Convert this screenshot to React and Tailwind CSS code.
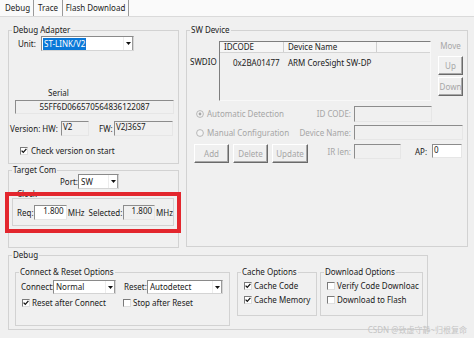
import React from "react";

const Check = ({ checked }) => (
  <span className="w-[8px] h-[8px] shrink-0 bg-white border border-t-[#7a7a7a] border-l-[#7a7a7a] border-r-[#dedede] border-b-[#dedede] flex items-center justify-center">
    {checked && (
      <svg width="6" height="6" viewBox="0 0 6 6">
        <path d="M0.6 2.6 L2.3 4.4 L5.4 0.9" stroke="#111" strokeWidth="1.3" fill="none" />
      </svg>
    )}
  </span>
);

const Radio = ({ on }) => (
  <svg width="8" height="8" viewBox="0 0 8 8" className="shrink-0">
    <circle cx="4" cy="4" r="3.4" fill="#f4f4f4" stroke="#b0b0b0" strokeWidth="0.9" />
    {on && <circle cx="4" cy="4" r="1.4" fill="#a8a8a8" />}
  </svg>
);

const Arrow = () => (
  <span className="w-[10px] h-full flex items-center justify-center border-l border-[#ececec] border-r border-r-[#9a9a9a]">
    <svg width="5" height="3" viewBox="0 0 5 3">
      <path d="M0 0H5L2.5 3Z" fill="#111" />
    </svg>
  </span>
);

const Group = ({ title, className, titleClass, children }) => (
  <div className={"relative border border-[#d2d2d2] " + className}>
    <span
      className={
        "absolute left-[3px] px-[1px] bg-[#f0f0f0] leading-[10px] whitespace-nowrap " +
        (titleClass || "top-[-6px]")
      }
    >
      {title}
    </span>
    {children}
  </div>
);

const Btn = ({ className, children }) => (
  <div
    className={
      "bg-[#f0f0f0] border border-t-white border-l-white border-r-[#6a6a6a] border-b-[#6a6a6a] shadow-[inset_-1px_-1px_0_#a8a8a8] text-[#a6a6a6] flex items-center justify-center " +
      className
    }
  >
    {children}
  </div>
);

const sunkGray =
  "bg-[#f0f0f0] border border-t-[#8c8c8c] border-l-[#8c8c8c] border-r-[#e6e6e6] border-b-[#e6e6e6]";
const sunkWhite =
  "bg-white border border-t-[#8c8c8c] border-l-[#8c8c8c] border-r-[#e6e6e6] border-b-[#e6e6e6]";

export default function App() {
  return (
    <div className="w-[474px] h-[338px] overflow-hidden relative bg-[#f0f0f0] text-[#1a1a1a] text-[8px] leading-[10px] font-['Noto_Sans','Noto_Sans_CJK_SC',sans-serif]">
      {/* Tabs */}
      <div className="h-[17px] bg-[#fafafa] border-b border-[#dadada] flex pl-[2px]">
        <div className="w-[32px] border-r border-[#9a9a9a] flex items-center justify-center">Debug</div>
        <div className="w-[29px] border-r border-[#9a9a9a] flex items-center justify-center">Trace</div>
        <div className="w-[66px] border-r border-[#9a9a9a] flex items-center justify-center">Flash Download</div>
      </div>

      <div className="pt-[13px] pl-[8px]">
        <div className="flex items-start gap-[7px]">
          {/* Left column */}
          <div className="flex flex-col gap-[6px] w-[171px]">
            <Group title="Debug Adapter" className="h-[134px]">
              <div className="flex items-center mt-[5px] pl-[9px] h-[15px]">
                <span className="w-[23px]">Unit:</span>
                <div className="w-[93px] h-[15px] bg-white border border-t-[#8a8a8a] border-l-[#8a8a8a] border-r-[#d4d4d4] border-b-[#d4d4d4] flex items-center">
                  <span className="flex-1 h-full flex items-center pl-[1px]">
                    <span className="h-[12px] flex items-center bg-[#0a78d8] text-white px-[1px]">ST-LINK/V2</span>
                  </span>
                  <Arrow />
                </div>
              </div>
              <div className="mt-[37px] pl-[39px]">Serial</div>
              <div className={"mt-[2px] ml-[6px] w-[159px] h-[14px] flex items-center justify-center " + sunkGray}>
                55FF6D066570564836122087
              </div>
              <div className="flex items-center mt-[7px] pl-[1px] h-[15px]">
                <span className="w-[51px] whitespace-nowrap">Version: HW:</span>
                <div className={"w-[28px] h-[15px] pl-[1px] " + sunkGray}>V2</div>
                <span className="ml-[10px] w-[15px]">FW:</span>
                <div className={"w-[59px] h-[15px] pl-[1px] " + sunkGray}>V2J36S7</div>
              </div>
              <div className="flex items-center mt-[10px] pl-[11px] h-[10px]">
                <Check checked />
                <span className="ml-[3px]">Check version on start</span>
              </div>
            </Group>

            <Group title="Target Com" className="h-[78px]">
              <div className="flex items-center mt-[3px] pl-[51px] h-[15px]">
                <span className="w-[18px]">Port:</span>
                <div className="w-[41px] h-[15px] bg-white border border-t-[#8a8a8a] border-l-[#8a8a8a] border-r-[#d4d4d4] border-b-[#d4d4d4] flex items-center">
                  <span className="flex-1 pl-[2px]">SW</span>
                  <Arrow />
                </div>
              </div>
              <Group title="Clock" titleClass="top-[-10px] bg-transparent" className="mt-[9px] ml-[3px] w-[162px] h-[28px]">
                <div className="flex items-center mt-[6px] pl-[4px] h-[15px] whitespace-nowrap">
                  <span className="w-[17px]">Req:</span>
                  <div className={"w-[33px] h-[15px] text-right pr-[2px] " + sunkWhite}>1.800</div>
                  <span className="ml-[1px] w-[19px]">MHz</span>
                  <span className="ml-[2px] w-[35px]">Selected:</span>
                  <div className={"w-[32px] h-[15px] text-right pr-[2px] " + sunkGray}>1.800</div>
                  <span className="ml-[1px]">MHz</span>
                </div>
              </Group>
              <div className="absolute left-[-4px] top-[21px] w-[176px] h-[41px] border-[4px] border-[#e3262d] pointer-events-none" />
            </Group>
          </div>

          {/* SW Device */}
          <Group title="SW Device" className="w-[282px] h-[217px]">
            <div className="flex items-start mt-[10px] pl-[3px]">
              <span className="w-[29px] mt-[16px]">SWDIO</span>
              <div className="w-[212px] h-[60px] border border-t-[#7e7e7e] border-l-[#7e7e7e] border-r-[#f8f8f8] border-b-[#f8f8f8] flex flex-col">
                <div className="h-[11px] flex border-b border-[#d4d4d4] bg-[#f6f6f6]">
                  <div className="w-[64px] pl-[4px] border-r border-[#cfcfcf] leading-[10px]">IDCODE</div>
                  <div className="w-[93px] pl-[4px] border-r border-[#cfcfcf] leading-[10px]">Device Name</div>
                  <div className="flex-1" />
                </div>
                <div className="flex mt-[5px]">
                  <div className="w-[64px] pl-[13px]">0x2BA01477</div>
                  <div className="pl-[4px]">ARM CoreSight SW-DP</div>
                </div>
              </div>
              <div className="ml-[7px] w-[25px] flex flex-col text-[#a6a6a6]">
                <div className="text-center">Move</div>
                <Btn className="mt-[5px] h-[19px]">Up</Btn>
                <Btn className="mt-[2px] h-[19px]">Down</Btn>
              </div>
            </div>

            <div className="flex items-center mt-[5px] pl-[9px] h-[16px] text-[#a6a6a6] whitespace-nowrap">
              <div className="w-[100px] flex items-center">
                <Radio on />
                <span className="ml-[3px]">Automatic Detection</span>
              </div>
              <span className="w-[55px] text-right">ID CODE:</span>
              <div className={"ml-[3px] w-[78px] h-[16px] " + sunkGray} />
            </div>
            <div className="flex items-center mt-[3px] pl-[9px] h-[15px] text-[#a6a6a6] whitespace-nowrap">
              <div className="w-[100px] flex items-center">
                <Radio />
                <span className="ml-[3px]">Manual Configuration</span>
              </div>
              <span className="w-[55px] text-right">Device Name:</span>
              <div className={"ml-[3px] w-[109px] h-[15px] " + sunkGray} />
            </div>
            <div className="flex items-start mt-[4px] pl-[7px] whitespace-nowrap">
              <Btn className="w-[35px] h-[19px]">Add</Btn>
              <Btn className="ml-[4px] w-[35px] h-[19px]">Delete</Btn>
              <Btn className="ml-[4px] w-[36px] h-[19px]">Update</Btn>
              <span className="w-[43px] h-[15px] flex items-center justify-end text-[#a6a6a6]">IR len:</span>
              <div className={"ml-[3px] w-[47px] h-[15px] " + sunkGray} />
              <span className="ml-[14px] w-[16px] h-[15px] flex items-center">AP:</span>
              <div className={"ml-[1px] w-[30px] h-[14px] pl-[1px] " + sunkWhite}>0</div>
            </div>
          </Group>
        </div>

        {/* Debug */}
        <Group title="Debug" className="mt-[7px] w-[420px] h-[75px]">
          <div className="flex items-start mt-[16px] pl-[6px] whitespace-nowrap">
            <Group title="Connect & Reset Options" className="w-[215px] h-[54px]">
              <div className="flex items-center mt-[7px] pl-[5px] h-[14px]">
                <span className="w-[32px]">Connect:</span>
                <div className="w-[63px] h-[14px] bg-white border border-t-[#8a8a8a] border-l-[#8a8a8a] border-r-[#d4d4d4] border-b-[#d4d4d4] flex items-center">
                  <span className="flex-1 pl-[2px]">Normal</span>
                  <Arrow />
                </div>
                <span className="ml-[8px] w-[23px]">Reset:</span>
                <div className="w-[76px] h-[14px] bg-white border border-t-[#8a8a8a] border-l-[#8a8a8a] border-r-[#d4d4d4] border-b-[#d4d4d4] flex items-center">
                  <span className="flex-1 pl-[2px]">Autodetect</span>
                  <Arrow />
                </div>
              </div>
              <div className="flex items-center mt-[4px] pl-[6px] h-[10px]">
                <div className="w-[101px] flex items-center">
                  <Check checked />
                  <span className="ml-[2px]">Reset after Connect</span>
                </div>
                <Check />
                <span className="ml-[2px]">Stop after Reset</span>
              </div>
            </Group>
            <Group title="Cache Options" className="ml-[7px] w-[80px] h-[44px]">
              <div className="flex items-center mt-[8px] pl-[6px] h-[10px]">
                <Check checked />
                <span className="ml-[2px]">Cache Code</span>
              </div>
              <div className="flex items-center mt-[4px] pl-[6px] h-[10px]">
                <Check checked />
                <span className="ml-[2px]">Cache Memory</span>
              </div>
            </Group>
            <Group title="Download Options" className="ml-[3px] w-[103px] h-[44px] overflow-visible">
              <div className="flex items-center mt-[8px] pl-[6px] h-[10px]">
                <Check />
                <span className="ml-[2px]">Verify Code Downloac</span>
              </div>
              <div className="flex items-center mt-[4px] pl-[6px] h-[10px]">
                <Check />
                <span className="ml-[2px]">Download to Flash</span>
              </div>
            </Group>
          </div>
        </Group>
      </div>

      <div className="absolute right-[7px] bottom-[3px] text-[8px] leading-[10px] text-[#c4c4c4] whitespace-nowrap">
        CSDN @致虚守静~归根复命
      </div>
    </div>
  );
}
